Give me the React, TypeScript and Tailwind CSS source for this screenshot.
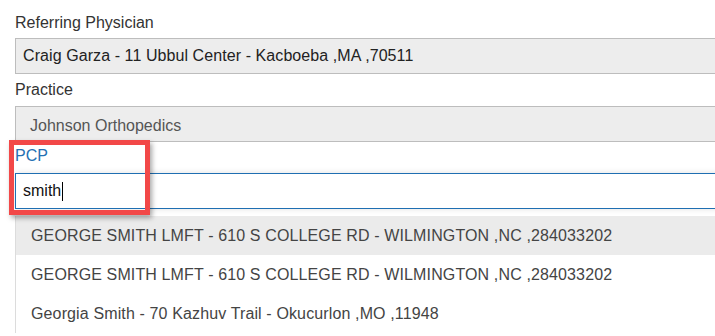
export default function App() {
  const results = [
    'GEORGE SMITH LMFT - 610 S COLLEGE RD - WILMINGTON ,NC ,284033202',
    'GEORGE SMITH LMFT - 610 S COLLEGE RD - WILMINGTON ,NC ,284033202',
    'Georgia Smith - 70 Kazhuv Trail - Okucurlon ,MO ,11948',
  ]

  return (
    <div
      className="relative w-[715px] h-[336px] overflow-hidden bg-white text-[16px]"
      style={{ fontFamily: '"Liberation Sans", Arial, sans-serif' }}
    >
      <div className="pl-[15px] pt-[12px] w-[780px]">
        {/* Referring Physician */}
        <label className="block h-[22px] leading-[22px] text-[#333]">Referring Physician</label>
        <div className="mt-[4px] h-[36px] flex items-center px-[7px] bg-[#ededed] border border-[#bdbdbd] text-[#222] tracking-[0.08px]">
          Craig Garza - 11 Ubbul Center - Kacboeba ,MA ,70511
        </div>

        {/* Practice */}
        <label className="block mt-[5px] h-[22px] leading-[22px] text-[#333]">Practice</label>
        <div className="mt-[5px] h-[36px] flex items-center pl-[14px] pt-[4px] bg-[#ededed] border border-[#bdbdbd] text-[#555]">
          Johnson Orthopedics
        </div>

        {/* PCP */}
        <label className="block mt-[3px] h-[22px] leading-[22px] text-[#2470b3]">PCP</label>
        <div className="mt-[6px] h-[36px] flex items-center px-[7px] bg-white border border-[#1f6fb2] shadow-[0_0_6px_rgba(0,0,0,0.12)] text-[#111]">
          <span>smith</span>
          <span className="ml-[1px] h-[19px] border-l border-black" />
        </div>

        {/* Suggestions */}
        <ul className="mt-[7px] border-l border-[#dcdcdc] text-[#444] tracking-[0.13px]">
          {results.map((r, i) => (
            <li
              key={i}
              className={`h-[39px] leading-[39px] pl-[15px] ${i === 0 ? 'bg-[#ebebeb]' : ''}`}
            >
              {r}
            </li>
          ))}
        </ul>
      </div>

      {/* Annotation highlight */}
      <div className="absolute left-[9px] top-[140px] w-[141px] h-[75px] border-[5px] border-[#f24848] shadow-[2px_3px_5px_rgba(0,0,0,0.35)]" />
    </div>
  )
}
